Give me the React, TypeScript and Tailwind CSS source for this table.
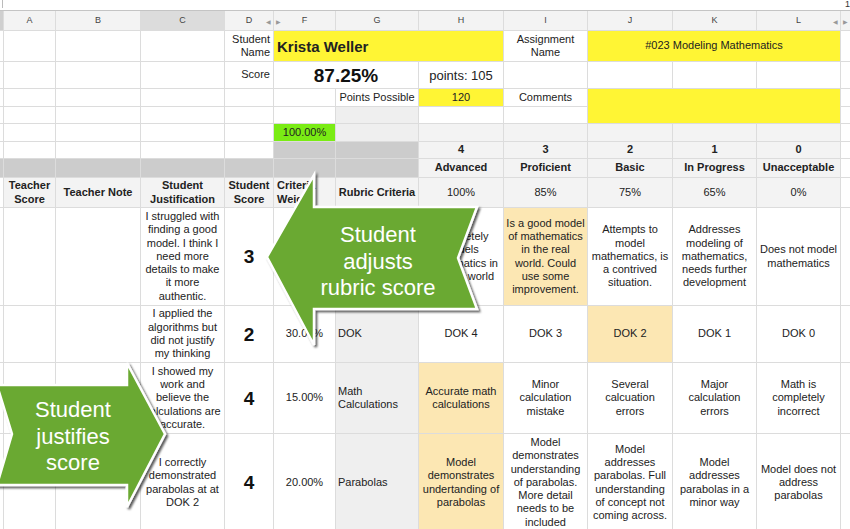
import React from "react";

const lines = (s: string) =>
  s.split("|").map((t, i, a) => (
    <React.Fragment key={i}>
      {t}
      {i < a.length - 1 && <br />}
    </React.Fragment>
  ));

function Cell({ className = "", children }: { className?: string; children?: React.ReactNode }) {
  return <div className={`flex items-center min-w-0 overflow-hidden ${className}`}>{children}</div>;
}

const W = "bg-white";
const CT = "justify-center text-center";
const HI = "bg-[#fce7b3]";
const HD = "bg-[#f3f3f3] justify-center text-[9px] text-[#444]";

type Row = {
  just: string;
  score: string;
  weight: string;
  crit: string;
  levels: string[];
  hi: number;
};

const body: Row[] = [
  {
    just: "I struggled with|finding a good|model. I think I|need more|details to make|it more|authentic.",
    score: "3",
    weight: "",
    crit: "",
    levels: [
      "Completely|models|mathematics in|the real world",
      "Is a good model|of mathematics|in the real|world. Could|use some|improvement.",
      "Attempts to|model|mathematics, is|a contrived|situation.",
      "Addresses|modeling of|mathematics,|needs further|development",
      "Does not model|mathematics",
    ],
    hi: 1,
  },
  {
    just: "I applied the|algorithms but|did not justify|my thinking",
    score: "2",
    weight: "30.00%",
    crit: "DOK",
    levels: ["DOK 4", "DOK 3", "DOK 2", "DOK 1", "DOK 0"],
    hi: 2,
  },
  {
    just: "I showed my|work and|believe the|calculations are|accurate.",
    score: "4",
    weight: "15.00%",
    crit: "Math|Calculations",
    levels: [
      "Accurate math|calculations",
      "Minor|calculation|mistake",
      "Several|calcuation|errors",
      "Major|calculation|errors",
      "Math is|completely|incorrect",
    ],
    hi: 0,
  },
  {
    just: "I correctly|demonstrated|parabolas at at|DOK 2",
    score: "4",
    weight: "20.00%",
    crit: "Parabolas",
    levels: [
      "Model|demonstrates|undertanding of|parabolas",
      "Model|demonstrates|understanding|of parabolas.|More detail|needs to be|included",
      "Model|addresses|parabolas. Full|understanding|of concept not|coming across.",
      "Model|addresses|parabolas in a|minor way",
      "Model does not|address|parabolas",
    ],
    hi: 0,
  },
];

export default function App() {
  return (
    <div className="relative w-[850px] h-[529px] overflow-hidden bg-white font-['Liberation_Sans',Arial,sans-serif] text-[11px] leading-[13.3px] text-[#222]">
      {/* top strip */}
      <div className="relative h-[10px] bg-white">
        <div className="absolute left-[2px] top-0 h-[8px] w-px bg-[#bbb]" />
        <div className="absolute left-[845px] top-[-2px] text-[9px] text-[#333]">1</div>
      </div>

      <div className="grid grid-cols-[3px_51px_84px_83px_48px_61px_82px_84px_83px_84px_83px_83px_9px] grid-rows-[19px_30px_26px_17px_16px_17px_16px_18px_29px_97px_56px_70px_97px] gap-px bg-[#dcdcdc] border-t border-[#c4c4c4]">
        {/* column header row */}
        <Cell className="bg-[#cfcfcf]" />
        <Cell className={HD}>A</Cell>
        <Cell className={HD}>B</Cell>
        <Cell className="bg-[#dcdcdc] justify-center text-[9px] text-[#444]">C</Cell>
        <Cell className={`${HD} relative`}>
          D<span className="absolute right-[2px] top-[5px] text-[6px] text-[#999]">◀</span>
        </Cell>
        <Cell className={`${HD} relative`}>
          <span className="absolute left-[2px] top-[5px] text-[6px] text-[#999]">▶</span>F
        </Cell>
        <Cell className={HD}>G</Cell>
        <Cell className={HD}>H</Cell>
        <Cell className={HD}>I</Cell>
        <Cell className={HD}>J</Cell>
        <Cell className={HD}>K</Cell>
        <Cell className={`${HD} relative`}>
          L<span className="absolute right-[2px] top-[5px] text-[6px] text-[#999]">◀</span>
        </Cell>
        <Cell className={`${HD} relative`}>
          <span className="absolute left-[2px] top-[5px] text-[6px] text-[#999]">▶</span>
        </Cell>

        {/* row 1 */}
        <Cell className={W} />
        <Cell className={W} />
        <Cell className={W} />
        <Cell className={W} />
        <Cell className={`${W} justify-end text-right pr-[3px]`}>{lines("Student|Name")}</Cell>
        <Cell className="col-span-3 bg-[#fff534] pl-[3px] text-[15px] font-bold leading-none">Krista Weller</Cell>
        <Cell className={`${W} ${CT}`}>{lines("Assignment|Name")}</Cell>
        <Cell className={`col-span-3 bg-[#fff534] ${CT}`}>#023 Modeling Mathematics</Cell>
        <Cell className={W} />

        {/* row 2 */}
        <Cell className={W} />
        <Cell className={W} />
        <Cell className={W} />
        <Cell className={W} />
        <Cell className={`${W} justify-end text-right pr-[3px]`}>Score</Cell>
        <Cell className={`col-span-2 ${W} ${CT} text-[19px] font-bold leading-none text-[#111]`}>87.25%</Cell>
        <Cell className={`${W} ${CT} text-[13px] leading-none`}>points: 105</Cell>
        <Cell className={W} />
        <Cell className={W} />
        <Cell className={W} />
        <Cell className={W} />
        <Cell className={W} />

        {/* row 3 */}
        <Cell className={W} />
        <Cell className={W} />
        <Cell className={W} />
        <Cell className={W} />
        <Cell className={W} />
        <Cell className={W} />
        <Cell className={`${W} ${CT}`}>Points Possible</Cell>
        <Cell className={`bg-[#fff534] ${CT}`}>120</Cell>
        <Cell className={`${W} ${CT}`}>Comments</Cell>
        <Cell className="col-span-3 row-span-2 bg-[#fff534]" />
        <Cell className={W} />

        {/* row 4 */}
        <Cell className={W} />
        <Cell className={W} />
        <Cell className={W} />
        <Cell className={W} />
        <Cell className={W} />
        <Cell className={W} />
        <Cell className="bg-[#efefef]" />
        <Cell className={W} />
        <Cell className={W} />
        <Cell className={W} />

        {/* row 5 */}
        <Cell className={W} />
        <Cell className={W} />
        <Cell className={W} />
        <Cell className={W} />
        <Cell className={W} />
        <Cell className={`bg-[#7aec14] ${CT}`}>100.00%</Cell>
        <Cell className="bg-[#efefef]" />
        <Cell className="bg-[#f3f3f3]" />
        <Cell className="bg-[#f3f3f3]" />
        <Cell className="bg-[#f3f3f3]" />
        <Cell className="bg-[#f3f3f3]" />
        <Cell className="bg-[#f3f3f3]" />
        <Cell className={W} />

        {/* row 6 */}
        <Cell className={W} />
        <Cell className={W} />
        <Cell className={W} />
        <Cell className={W} />
        <Cell className={W} />
        <Cell className="bg-[#cccccc]" />
        <Cell className="bg-[#cccccc]" />
        {["4", "3", "2", "1", "0"].map((n) => (
          <Cell key={n} className={`bg-[#f3f3f3] ${CT} font-bold`}>
            {n}
          </Cell>
        ))}
        <Cell className={W} />

        {/* row 7 */}
        <Cell className="bg-[#cccccc]" />
        <Cell className="bg-[#cccccc]" />
        <Cell className="bg-[#cccccc]" />
        <Cell className="bg-[#cccccc]" />
        <Cell className="bg-[#cccccc]" />
        <Cell className="bg-[#cccccc]" />
        <Cell className="bg-[#cccccc]" />
        {["Advanced", "Proficient", "Basic", "In Progress", "Unacceptable"].map((n) => (
          <Cell key={n} className={`bg-[#f3f3f3] ${CT} font-bold`}>
            {n}
          </Cell>
        ))}
        <Cell className={W} />

        {/* row 8: headers */}
        <Cell className={W} />
        <Cell className={`bg-[#f3f3f3] ${CT} font-bold`}>{lines("Teacher|Score")}</Cell>
        <Cell className={`bg-[#f3f3f3] ${CT} font-bold`}>Teacher Note</Cell>
        <Cell className={`bg-[#f3f3f3] ${CT} font-bold`}>{lines("Student|Justification")}</Cell>
        <Cell className={`bg-[#f3f3f3] ${CT} font-bold`}>{lines("Student|Score")}</Cell>
        <Cell className="bg-[#f3f3f3] justify-start text-left pl-[3px] font-bold">{lines("Criteria|Weight")}</Cell>
        <Cell className={`bg-[#f3f3f3] ${CT} font-bold`}>Rubric Criteria</Cell>
        {["100%", "85%", "75%", "65%", "0%"].map((n) => (
          <Cell key={n} className={`bg-[#f3f3f3] ${CT}`}>
            {n}
          </Cell>
        ))}
        <Cell className={W} />

        {/* body rows */}
        {body.map((r, ri) => (
          <React.Fragment key={ri}>
            <Cell className={W} />
            <Cell className={W} />
            <Cell className={W} />
            <Cell className={`${W} ${CT}`}>{lines(r.just)}</Cell>
            <Cell className={`${W} ${CT} text-[19px] font-bold leading-none text-[#111]`}>{r.score}</Cell>
            <Cell className={`${W} ${CT}`}>{r.weight}</Cell>
            <Cell className="bg-[#efefef] justify-start text-left pl-[2px]">{lines(r.crit)}</Cell>
            {r.levels.map((lv, li) => (
              <Cell key={li} className={`${li === r.hi ? HI : W} ${CT}`}>
                {lines(lv)}
              </Cell>
            ))}
            <Cell className={W} />
          </React.Fragment>
        ))}
      </div>

      {/* callout arrows */}
      <svg
        className="absolute left-0 top-0 pointer-events-none"
        width="850"
        height="529"
        viewBox="0 0 850 529"
      >
        <defs>
          <filter id="sh" x="-20%" y="-20%" width="140%" height="140%">
            <feDropShadow dx="2" dy="2" stdDeviation="1.2" floodColor="#000" floodOpacity="0.65" />
          </filter>
        </defs>
        <polygon
          points="267,257 314,175 314,207 477,207 458,258 477,309 314,309 314,345"
          fill="#6ba932"
          stroke="#ffffff"
          strokeWidth="2.5"
          filter="url(#sh)"
        />
        <g
          fill="#ffffff"
          fontFamily="'Liberation Sans', Arial, sans-serif"
          fontSize="22"
          textAnchor="middle"
        >
          <text x="378" y="242">Student</text>
          <text x="378" y="268.5">adjusts</text>
          <text x="378" y="295">rubric score</text>
        </g>

        <polygon
          points="-3,385 127,385 127,363 165,434 127,507 127,485 -3,485 12,434"
          fill="#6ba932"
          stroke="#ffffff"
          strokeWidth="2.5"
          filter="url(#sh)"
        />
        <g
          fill="#ffffff"
          fontFamily="'Liberation Sans', Arial, sans-serif"
          fontSize="22"
          textAnchor="middle"
        >
          <text x="73" y="417">Student</text>
          <text x="73" y="443.5">justifies</text>
          <text x="73" y="470">score</text>
        </g>
      </svg>
    </div>
  );
}
